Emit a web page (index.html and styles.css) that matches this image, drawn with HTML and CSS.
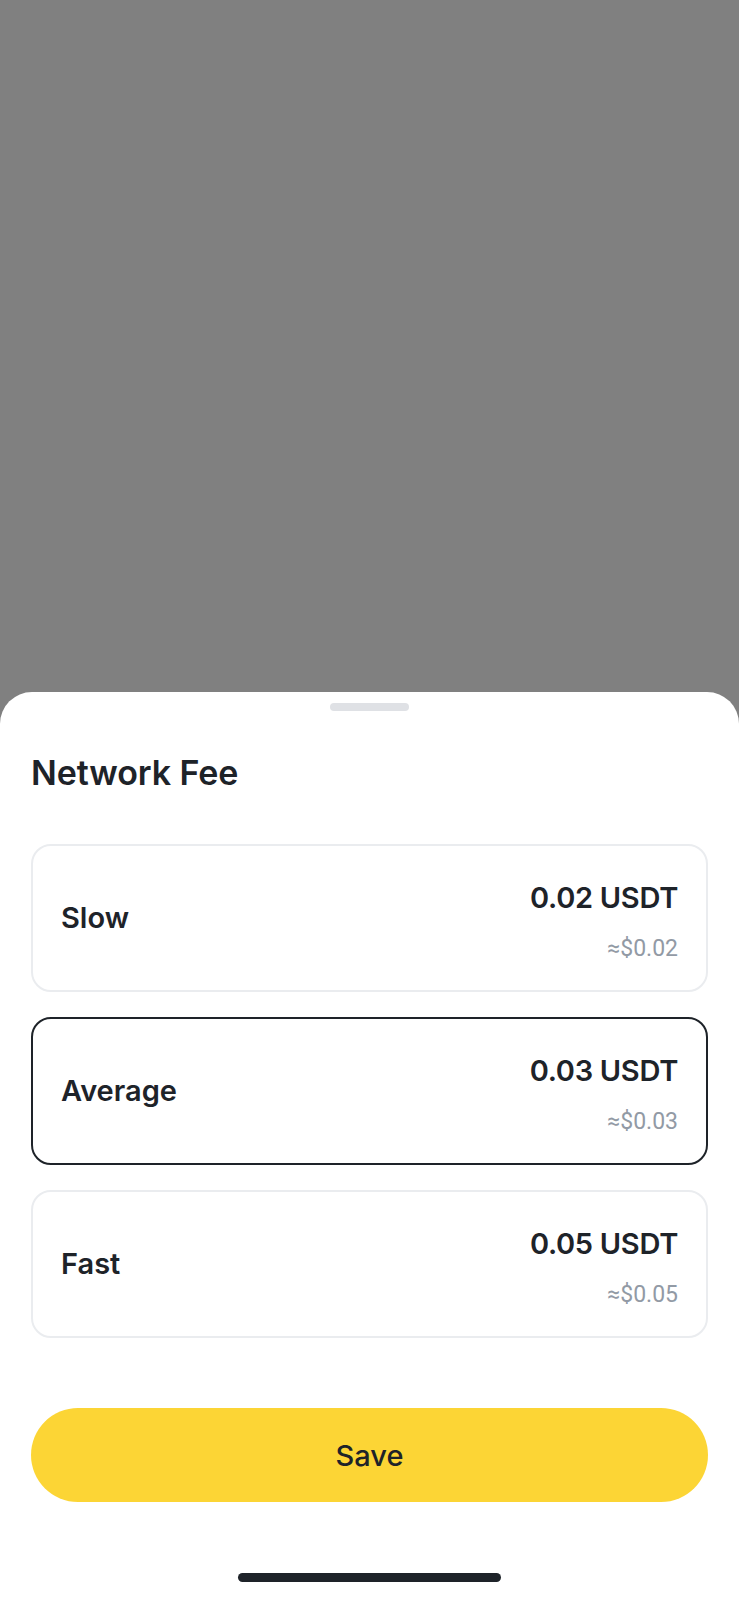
FILE: index.html
```html
<!DOCTYPE html>
<html lang="en">
<head>
<meta charset="utf-8">
<title>Network Fee</title>
<link rel="stylesheet" href="styles.css">
</head>
<body>
<div class="screen">
  <div class="sheet">
    <div class="handle"></div>
    <h1 class="title">Network Fee</h1>
    <div class="options">
      <div class="option">
        <span class="label">Slow</span>
        <div class="fee">
          <span class="amount">0.02 USDT</span>
          <span class="usd">≈$0.02</span>
        </div>
      </div>
      <div class="option selected">
        <span class="label">Average</span>
        <div class="fee">
          <span class="amount">0.03 USDT</span>
          <span class="usd">≈$0.03</span>
        </div>
      </div>
      <div class="option">
        <span class="label">Fast</span>
        <div class="fee">
          <span class="amount">0.05 USDT</span>
          <span class="usd">≈$0.05</span>
        </div>
      </div>
    </div>
    <button class="save">Save</button>
    <div class="home-indicator"></div>
  </div>
</div>
</body>
</html>
```

FILE: styles.css
```css
* { box-sizing: border-box; }

html, body {
  margin: 0;
  padding: 0;
}

body {
  background: #808080;
  font-family: Inter, Roboto, "Liberation Sans", sans-serif;
  color: #1e2329;
}

.screen {
  min-height: 1600px;
  display: flex;
  flex-direction: column;
  justify-content: flex-end;
}

.sheet {
  background: #ffffff;
  border-radius: 32px 32px 0 0;
  height: 908px;
  padding: 11px 31px 0;
  display: flex;
  flex-direction: column;
}

.handle {
  align-self: center;
  width: 79px;
  height: 8px;
  border-radius: 4px;
  background: #dfe1e5;
}

.title {
  margin: 42px 0 0;
  font-size: 34px;
  line-height: 40px;
  font-weight: 600;
  letter-spacing: -0.1px;
}

.options {
  margin-top: 51px;
  display: flex;
  flex-direction: column;
  gap: 25px;
}

.option {
  height: 148px;
  border: 2px solid #eaecef;
  border-radius: 20px;
  padding: 0 28px;
  display: flex;
  align-items: center;
  justify-content: space-between;
}

.option.selected {
  border-color: #1e2329;
}

.label {
  font-size: 29px;
  line-height: 36px;
  font-weight: 600;
}

.fee {
  display: flex;
  flex-direction: column;
  align-items: flex-end;
  gap: 18px;
  margin-top: 7px;
}

.amount {
  font-size: 29px;
  line-height: 36px;
  font-weight: 600;
  letter-spacing: -0.3px;
}

.usd {
  font-family: Roboto, "Liberation Sans", sans-serif;
  font-size: 23px;
  line-height: 30px;
  color: #929aa5;
}

.save {
  margin-top: 70px;
  height: 94px;
  border: none;
  border-radius: 47px;
  background: #fcd535;
  color: #1e2329;
  font-family: Inter, Roboto, "Liberation Sans", sans-serif;
  font-size: 29px;
  font-weight: 500;
}

.home-indicator {
  align-self: center;
  margin-top: 71px;
  width: 263px;
  height: 9px;
  border-radius: 5px;
  background: #1e2329;
}
```
